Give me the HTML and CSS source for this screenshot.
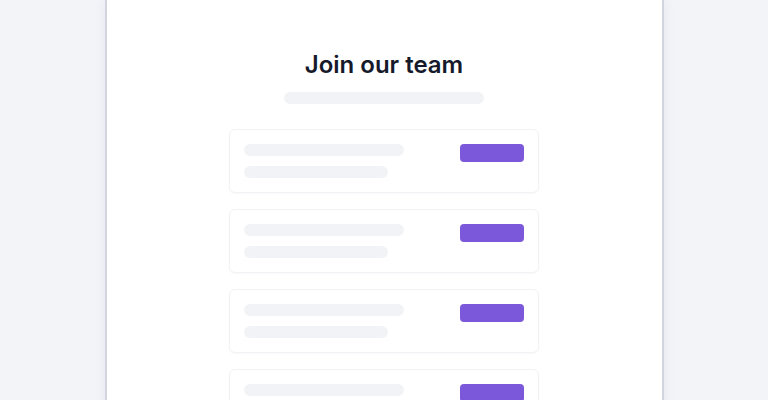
FILE: index.html
```html
<!DOCTYPE html>
<html>
<head>
<meta charset="utf-8">
<link rel="stylesheet" href="styles.css">
</head>
<body>
<div class="panel">
  <h1 class="title">Join our team</h1>
  <div class="subtitle"></div>
  <div class="list">
    <div class="card">
      <div class="lines"><div class="line long"></div><div class="line short"></div></div>
      <div class="btn"></div>
    </div>
    <div class="card">
      <div class="lines"><div class="line long"></div><div class="line short"></div></div>
      <div class="btn"></div>
    </div>
    <div class="card">
      <div class="lines"><div class="line long"></div><div class="line short"></div></div>
      <div class="btn"></div>
    </div>
    <div class="card">
      <div class="lines"><div class="line long"></div><div class="line short"></div></div>
      <div class="btn"></div>
    </div>
  </div>
</div>
</body>
</html>
```
FILE: styles.css
```css
html, body {
  margin: 0;
  padding: 0;
  height: 100%;
  overflow: hidden;
}
body {
  background: #f3f4f8;
  font-family: Inter, "Noto Sans", sans-serif;
}
.panel {
  box-sizing: border-box;
  width: 559px;
  margin: 0 auto;
  min-height: 100%;
  background: #ffffff;
  border-left: 2px solid #d2d4e0;
  border-right: 2px solid #d2d4e0;
  box-shadow: 0 0 12px rgba(30, 35, 70, 0.06);
  padding-top: 49px;
  display: flex;
  flex-direction: column;
  align-items: center;
}
.title {
  margin: 0;
  font-size: 24px;
  line-height: 32px;
  font-weight: 600;
  color: #161a2b;
}
.subtitle {
  margin-top: 11px;
  width: 200px;
  height: 12px;
  border-radius: 6px;
  background: #f1f3f6;
}
.list {
  margin-top: 25px;
  display: flex;
  flex-direction: column;
  gap: 16px;
  width: 310px;
}
.card {
  box-sizing: border-box;
  height: 64px;
  border: 1px solid #f1f2f5;
  border-radius: 6px;
  box-shadow: 0 1px 2px rgba(20, 25, 50, 0.03);
  padding: 14px 14px 0 14px;
  display: flex;
  justify-content: space-between;
  align-items: flex-start;
}
.lines {
  display: flex;
  flex-direction: column;
  gap: 10px;
}
.line {
  height: 12px;
  border-radius: 6px;
  background: #f1f3f6;
}
.line.long { width: 160px; }
.line.short { width: 144px; }
.btn {
  width: 64px;
  height: 18px;
  border-radius: 4px;
  background: #7b57d9;
}
```
